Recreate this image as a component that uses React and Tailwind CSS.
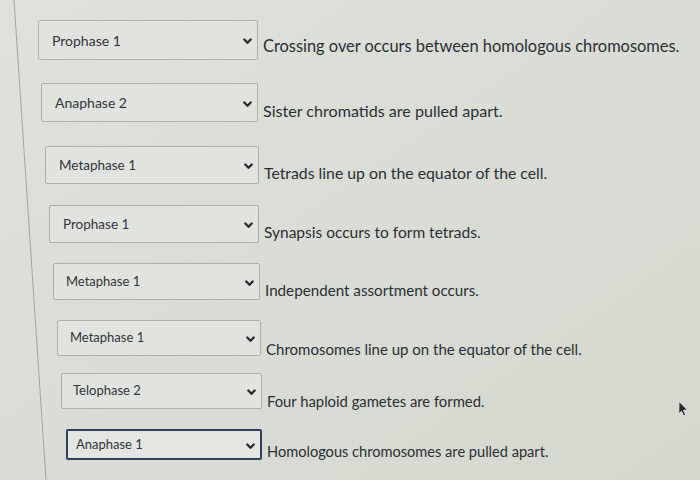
import React from "react";

const rows = [
  { sel: "Prophase 1", desc: "Crossing over occurs between homologous chromosomes.", row: "mt-[20px]", box: "ml-[38px] w-[220px] h-[40px] pl-[13px]", d: "text-[16.4px] mt-[18px]", s: "text-[14px]" },
  { sel: "Anaphase 2", desc: "Sister chromatids are pulled apart.", row: "mt-[23px]", box: "ml-[41px] w-[217px] h-[39px] pl-[13px]", d: "text-[16.1px] mt-[20px]", s: "text-[14px]" },
  { sel: "Metaphase 1", desc: "Tetrads line up on the equator of the cell.", row: "mt-[24px]", box: "ml-[45px] w-[214px] h-[38px] pl-[13px]", d: "text-[15.8px] mt-[19px]", s: "text-[13.5px]" },
  { sel: "Prophase 1", desc: "Synapsis occurs to form tetrads.", row: "mt-[21px]", box: "ml-[49px] w-[210px] h-[38px] pl-[13px]", d: "text-[15.5px] mt-[20px]", s: "text-[13.5px]" },
  { sel: "Metaphase 1", desc: "Independent assortment occurs.", row: "mt-[20px]", box: "ml-[53px] w-[207px] h-[37px] pl-[12px]", d: "text-[15.2px] mt-[20px]", s: "text-[13px]" },
  { sel: "Metaphase 1", desc: "Chromosomes line up on the equator of the cell.", row: "mt-[20px]", box: "ml-[57px] w-[204px] h-[36px] pl-[12px]", d: "text-[15px] mt-[22px]", s: "text-[13px]" },
  { sel: "Telophase 2", desc: "Four haploid gametes are formed.", row: "mt-[16px]", box: "ml-[61px] w-[201px] h-[36px] pl-[11px]", d: "text-[14.8px] mt-[21px]", s: "text-[13px]" },
  { sel: "Anaphase 1", desc: "Homologous chromosomes are pulled apart.", row: "mt-[20px]", box: "ml-[66px] w-[196px] h-[31px] pl-[8px]", d: "text-[14.6px] mt-[16px]", s: "text-[13px]", focus: true },
];

function Chevron() {
  return (
    <svg width="9" height="7" viewBox="0 0 9 7" className="shrink-0 mt-[3px]">
      <path d="M1.3 1.5 L4.5 4.8 L7.7 1.5" fill="none" stroke="#262a2e" strokeWidth="2.3" strokeLinecap="round" strokeLinejoin="round" />
    </svg>
  );
}

export default function App() {
  return (
    <div
      className="relative w-[700px] h-[480px] overflow-hidden bg-gradient-to-br from-[#dfe2dc] via-[#d9ddd6] to-[#d5d8ce] text-[#2c3034]"
      style={{ fontFamily: "Lato, 'Open Sans', sans-serif" }}
    >
      <svg className="absolute inset-0 pointer-events-none" width="700" height="480">
        <line x1="14" y1="0" x2="46" y2="480" stroke="#a3a69f" strokeWidth="1" />
      </svg>
      <div className="relative flex flex-col">
        {rows.map((r, i) => (
          <div key={i} className={`flex items-start ${r.row}`}>
            <div
              className={`${r.box} shrink-0 flex items-center justify-between pr-[5px] rounded-[2px] ${
                r.focus ? "border-2 border-[#2f3f5c] bg-[#e3e6e1]" : "border border-[#aeb1ab] bg-[#e1e4de]"
              }`}
            >
              <span className={`${r.s} text-[#30343a]`}>{r.sel}</span>
              <Chevron />
            </div>
            <div className={`ml-[5px] ${r.d} leading-none whitespace-nowrap text-[#2a2e33]`}>{r.desc}</div>
          </div>
        ))}
      </div>
      <svg className="absolute left-[674px] top-[400px]" width="16" height="18" viewBox="0 0 16 18">
        <path d="M5 1.5 L13.5 10 L9.5 10.2 L11.6 15 L9.6 16 L7.6 11.2 L4.8 13.8 Z" fill="#23272b" stroke="#eef1ec" strokeWidth="0.8" strokeLinejoin="round" />
      </svg>
    </div>
  );
}
